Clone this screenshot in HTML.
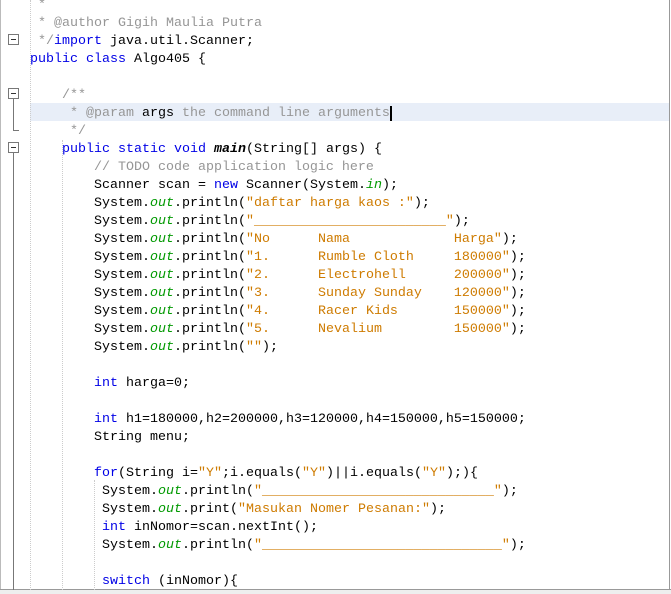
<!DOCTYPE html><html><head><style>
body{margin:0;width:671px;height:594px;overflow:hidden;background:#fff;position:relative;font-family:"Liberation Mono",monospace;font-size:13.33px}
.l{position:absolute;left:30px;height:18px;line-height:18px;white-space:pre;color:#000;transform:translateY(2px)}
.k{color:#0000e6}.c{color:#969696}.s{color:#ce7b00}.o{color:#009900;font-style:italic}.b{font-weight:bold;font-style:italic}
.box{position:absolute;left:8px;width:9px;height:9px;border:1px solid #777;background:#fff}
.box:after{content:"";position:absolute;left:2px;top:4px;width:5px;height:1px;background:#333}
.g{position:absolute;border-left:1px dotted #ccc;top:0;height:590px}
</style></head><body>
<div style="position:absolute;left:0;top:0;width:1px;height:590px;background:#bbb"></div>
<div style="position:absolute;left:669px;top:0;width:1px;height:590px;background:#999"></div>
<div style="position:absolute;left:0;top:589px;width:671px;height:1px;background:#999"></div>
<div style="position:absolute;left:0;top:590px;width:671px;height:4px;background:#eee"></div>
<div style="position:absolute;left:30px;top:103px;width:639px;height:18px;background:#e8eef8"></div>
<div class="g" style="left:30px"></div><div class="g" style="left:62px;top:140px;height:450px"></div><div class="g" style="left:94px;top:480px;height:110px"></div>
<div style="position:absolute;left:13px;top:99px;width:1px;height:31px;background:#777"></div>
<div style="position:absolute;left:13px;top:130px;width:6px;height:1px;background:#777"></div>
<div style="position:absolute;left:13px;top:153px;width:1px;height:437px;background:#777"></div>
<div class="box" style="top:34px"></div><div class="box" style="top:88px"></div><div class="box" style="top:142px"></div>
<div class="l c" style="top:-5px"> *</div>
<div class="l c" style="top:13px"> * @author Gigih Maulia Putra</div>
<div class="l" style="top:31px"><span class="c"> */</span><span class="k">import</span> java.util.Scanner;</div>
<div class="l" style="top:49px"><span class="k">public class</span> Algo405 {</div>
<div class="l c" style="top:85px">    /**</div>
<div class="l" style="top:103px"><span class="c">     * @param </span>args<span class="c"> the command line arguments</span><span style="border-left:2px solid #000"></span></div>
<div class="l c" style="top:121px">     */</div>
<div class="l" style="top:139px">    <span class="k">public static void</span> <span class="b">main</span>(String[] args) {</div>
<div class="l c" style="top:157px">        // TODO code application logic here</div>
<div class="l" style="top:175px">        Scanner scan = <span class="k">new</span> Scanner(System.<span class="o">in</span>);</div>
<div class="l" style="top:193px">        System.<span class="o">out</span>.println(<span class="s">"daftar harga kaos :"</span>);</div>
<div class="l" style="top:211px">        System.<span class="o">out</span>.println(<span class="s">"________________________"</span>);</div>
<div class="l" style="top:229px">        System.<span class="o">out</span>.println(<span class="s">"No      Nama             Harga"</span>);</div>
<div class="l" style="top:247px">        System.<span class="o">out</span>.println(<span class="s">"1.      Rumble Cloth     180000"</span>);</div>
<div class="l" style="top:265px">        System.<span class="o">out</span>.println(<span class="s">"2.      Electrohell      200000"</span>);</div>
<div class="l" style="top:283px">        System.<span class="o">out</span>.println(<span class="s">"3.      Sunday Sunday    120000"</span>);</div>
<div class="l" style="top:301px">        System.<span class="o">out</span>.println(<span class="s">"4.      Racer Kids       150000"</span>);</div>
<div class="l" style="top:319px">        System.<span class="o">out</span>.println(<span class="s">"5.      Nevalium         150000"</span>);</div>
<div class="l" style="top:337px">        System.<span class="o">out</span>.println(<span class="s">""</span>);</div>
<div class="l" style="top:373px">        <span class="k">int</span> harga=0;</div>
<div class="l" style="top:409px">        <span class="k">int</span> h1=180000,h2=200000,h3=120000,h4=150000,h5=150000;</div>
<div class="l" style="top:427px">        String menu;</div>
<div class="l" style="top:463px">        <span class="k">for</span>(String i=<span class="s">"Y"</span>;i.equals(<span class="s">"Y"</span>)||i.equals(<span class="s">"Y"</span>);){</div>
<div class="l" style="top:481px">         System.<span class="o">out</span>.println(<span class="s">"_____________________________"</span>);</div>
<div class="l" style="top:499px">         System.<span class="o">out</span>.print(<span class="s">"Masukan Nomer Pesanan:"</span>);</div>
<div class="l" style="top:517px">         <span class="k">int</span> inNomor=scan.nextInt();</div>
<div class="l" style="top:535px">         System.<span class="o">out</span>.println(<span class="s">"______________________________"</span>);</div>
<div class="l" style="top:571px">         <span class="k">switch</span> (inNomor){</div>
</body></html>
